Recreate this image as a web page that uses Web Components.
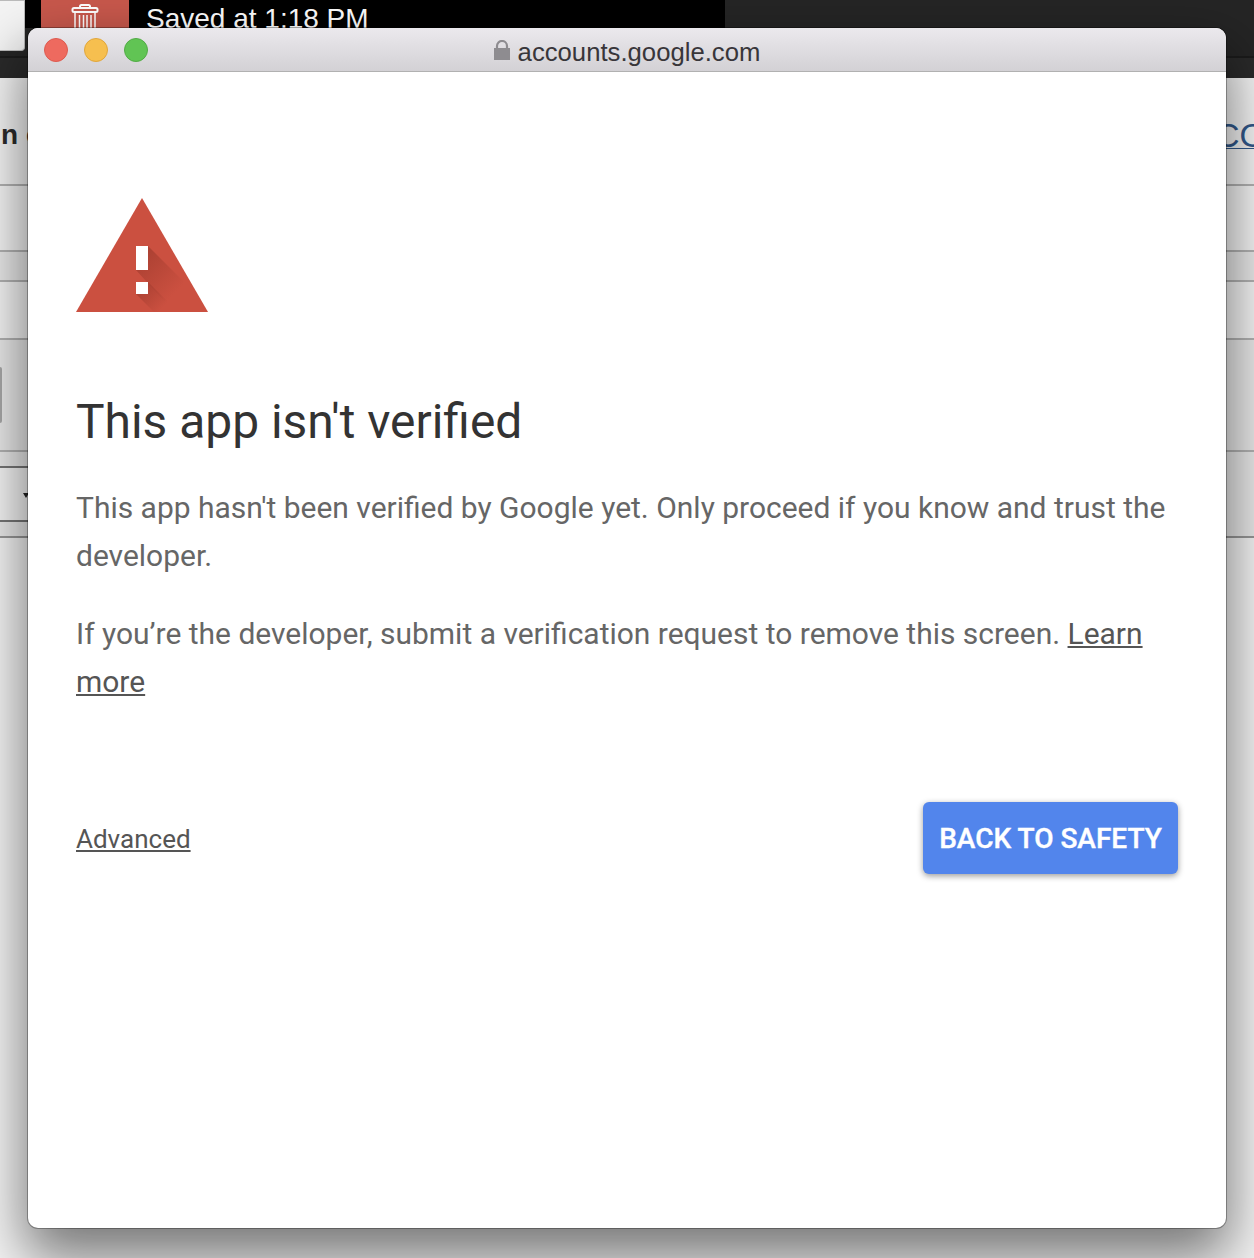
<!DOCTYPE html>
<html>
<head>
<meta charset="utf-8">
<title>This app isn't verified</title>
<style>
  html, body { margin: 0; height: 100%; overflow: hidden; background: #f2f2f2; }
</style>
</head>
<body>
<app-backdrop></app-backdrop>
<mac-window address="accounts.google.com">
  <unverified-page></unverified-page>
</mac-window>

<script>
const backdropTemplate = `
  <div class="top">
    <div class="tab"></div>
    <div class="black">
      <div class="trash">
        <svg width="28" height="26" viewBox="0 0 28 26" fill="none" stroke="#fff" stroke-width="2">
          <path d="M9 4V2.5Q9 1 10.5 1h7Q19 1 19 2.5V4"/>
          <rect x="1.5" y="4" width="25" height="4" rx="1.5"/>
          <path d="M4 8v18M24 8v18M8.500 11v15M12.500 11v15M16 11v15M20 11v15" stroke-width="1.500"/>
        </svg>
      </div>
      <span class="saved">Saved at 1:18 PM</span>
    </div>
    <div class="fill"></div>
  </div>
  <div class="under">
    <div class="line"></div>
    <div class="dark"></div>
  </div>
  <div class="row r1"><b>n o</b><a>CO</a></div>
  <div class="row r2"></div>
  <div class="row r3 band"></div>
  <div class="row r4"></div>
  <div class="row r5 band"><i class="edge"></i></div>
  <div class="row r6 band"><div class="seg top-seg"></div><div class="seg mid-seg"><i class="caret"></i></div></div>
  <div class="rest"></div>

  <style>
  :host {
    display: block;
    height: 1258px;
    overflow: hidden;
    font-family: "Liberation Sans", Arial, sans-serif;
  }

  .top {
    display: flex;
    height: 56px;
    background: #252525;
  }

  .tab {
    width: 24px;
    height: 49px;
    background: #f4f4f4;
    border: 1px solid #bbb;
    border-left: 0;
    border-radius: 0 0 4px 0;
  }

  .black {
    width: 700px;
    height: 28px;
    display: flex;
    align-items: flex-start;
    padding-left: 16px;
    box-sizing: border-box;
    background: #000;
    overflow: hidden;
  }

  .trash {
    width: 88px;
    height: 28px;
    background: #c8584c;
    display: flex;
    justify-content: center;
    padding-top: 4px;
    box-sizing: border-box;
  }

  .saved {
    margin-left: 17px;
    color: #fff;
    font-size: 28px;
    line-height: 37px;
    white-space: nowrap;
  }

  .fill { flex: 1; }

  .under .line { height: 2px; background: #1b1b1b; }
  .under .dark { height: 20px; background: #2a2a2a; }

  .row {
    border-bottom: 2px solid #b4b4b4;
    background: #f6f6f6;
    box-sizing: border-box;
    display: flex;
    overflow: hidden;
  }
  .band { background: #ebebeb; }
  .rest { height: 720px; background: #f6f6f6; }

  .r1 {
    height: 108px;
    justify-content: space-between;
    align-items: center;
    padding: 8px 0 0 1px;
    font-size: 28px;
    color: #2c2c2c;
  }
  .r1 a {
    margin-right: -12px;
    font-size: 34px;
    color: #32598c;
    text-decoration: underline;
    text-decoration-thickness: 1px;
  }
  .r2 { height: 66px; }
  .r3 { height: 30px; }
  .r4 { height: 58px; }
  .r5 { height: 112px; align-items: center; }
  .r6 { height: 86px; flex-direction: column; border-bottom-color: #989898; }

  .edge {
    width: 2px;
    height: 56px;
    background: #a9a9a9;
    border-radius: 0 4px 4px 0;
  }

  .seg { width: 28px; flex: none; }
  .top-seg { height: 14px; }
  .mid-seg {
    height: 56px;
    background: #f6f6f6;
    border-top: 2px solid #777;
    border-bottom: 2px solid #777;
    box-sizing: border-box;
    display: flex;
    justify-content: flex-end;
    padding-top: 25px;
  }
  .caret {
    width: 0;
    height: 0;
    border-left: 3px solid transparent;
    border-right: 3px solid transparent;
    border-top: 5px solid #222;
    margin-right: -1px;
  }
  </style>
`;

customElements.define(
  "app-backdrop",
  class AppBackdrop extends HTMLElement {
    constructor() {
      super();

      this.attachShadow({ mode: "open" });
      this.shadowRoot.innerHTML = backdropTemplate;
    }
  }
);

const windowTemplate = `
  <div class="bar">
    <div class="lights">
      <i class="red"></i>
      <i class="yellow"></i>
      <i class="green"></i>
    </div>
    <svg class="lock" width="16" height="20" viewBox="0 0 16 20">
      <path d="M3 9V6a5 5 0 0 1 10 0v3" fill="none" stroke="#8e8c90" stroke-width="2.200"/>
      <rect y="8" width="16" height="12" fill="#8e8c90"/>
    </svg>
    <span class="address"></span>
  </div>
  <div class="content"><slot></slot></div>

  <style>
  :host {
    position: absolute;
    left: 28px;
    top: 28px;
    width: 1198px;
    height: 1200px;
    display: flex;
    flex-direction: column;
    background: #fff;
    border-radius: 10px;
    box-shadow: 0 0 0 1px rgba(0, 0, 0, 0.3), 0 26px 56px 4px rgba(0, 0, 0, 0.52);
    overflow: hidden;
  }

  .bar {
    position: relative;
    height: 44px;
    flex: none;
    box-sizing: border-box;
    display: flex;
    align-items: center;
    justify-content: center;
    gap: 8px;
    padding-top: 6px;
    background: linear-gradient(#ebe9ed, #d3d1d5);
    border-bottom: 1px solid #b1b1b1;
  }

  .lights {
    position: absolute;
    left: 16px;
    top: 10px;
    display: flex;
    gap: 16px;
  }

  .lights i {
    width: 24px;
    height: 24px;
    box-sizing: border-box;
    border-radius: 50%;
    border: 1px solid;
  }
  .red { background: #ee6a5f; border-color: #dd5a4f !important; }
  .yellow { background: #f6bf4f; border-color: #e0a63c !important; }
  .green { background: #61c454; border-color: #52ab46 !important; }

  .lock { margin-top: -5px; }

  .address {
    font-family: "Liberation Sans", Arial, sans-serif;
    font-size: 25.700px;
    color: #38363a;
  }

  .content { flex: 1; }
  </style>
`;

customElements.define(
  "mac-window",
  class MacWindow extends HTMLElement {
    constructor() {
      super();

      this.attachShadow({ mode: "open" });
      this.shadowRoot.innerHTML = windowTemplate;
      this.shadowRoot.querySelector(".address").textContent = this.getAttribute("address");
    }
  }
);

const warningTemplate = `
  <svg width="132" height="114" viewBox="0 0 132 114">
    <defs>
      <linearGradient id="fade" gradientUnits="userSpaceOnUse" x1="66" y1="60" x2="100" y2="94">
        <stop offset="0" stop-color="#a83f31" stop-opacity="0.85"/>
        <stop offset="1" stop-color="#a83f31" stop-opacity="0"/>
      </linearGradient>
      <linearGradient id="fade-dot" gradientUnits="userSpaceOnUse" x1="66" y1="90" x2="86" y2="110">
        <stop offset="0" stop-color="#a83f31" stop-opacity="0.85"/>
        <stop offset="1" stop-color="#a83f31" stop-opacity="0"/>
      </linearGradient>
      <clipPath id="inside"><polygon points="66,0 132,114 0,114"/></clipPath>
    </defs>
    <polygon points="66,0 132,114 0,114" fill="#cb5040"/>
    <g clip-path="url(#inside)">
      <polygon points="72,48 118,94 98,114 60,72" fill="url(#fade)"/>
      <polygon points="72,84 96,108 84,114 78,114 60,96" fill="url(#fade-dot)"/>
    </g>
    <rect x="60" y="48" width="12" height="24" fill="#fff"/>
    <rect x="60" y="84" width="12" height="12" fill="#fff"/>
  </svg>

  <style>
  :host { display: block; height: 114px; }
  svg { display: block; }
  </style>
`;

customElements.define(
  "warning-icon",
  class WarningIcon extends HTMLElement {
    constructor() {
      super();

      this.attachShadow({ mode: "open" });
      this.shadowRoot.innerHTML = warningTemplate;
    }
  }
);

const pageTemplate = `
  <warning-icon></warning-icon>
  <h1>This app isn't verified</h1>
  <p>This app hasn't been verified by Google yet. Only proceed if you know and trust the developer.</p>
  <p class="second">If you’re the developer, submit a verification request to remove this screen. <a>Learn more</a></p>
  <div class="actions">
    <a class="advanced">Advanced</a>
    <button>BACK TO SAFETY</button>
  </div>

  <style>
  :host {
    display: block;
    padding: 126px 48px 0 48px;
    font-family: Roboto, Arial, sans-serif;
    color: #666;
  }

  h1 {
    margin: 79px 0 0 0;
    font-size: 47.900px;
    line-height: 62px;
    font-weight: 400;
    color: #333;
  }

  p {
    margin: 31px 0 0 0;
    font-size: 29.970px;
    line-height: 48px;
  }

  p.second { margin-top: 30px; }

  a {
    color: #555;
    text-decoration: underline;
  }

  .actions {
    display: flex;
    justify-content: space-between;
    align-items: center;
    margin-top: 96px;
  }

  .advanced { font-size: 26px; padding-top: 2px; }

  button {
    width: 255px;
    height: 72px;
    padding: 0;
    border: 0;
    border-radius: 6px;
    background: #5285ec;
    color: #fff;
    font-family: Roboto, Arial, sans-serif;
    font-size: 28px;
    font-weight: 500;
    -webkit-text-stroke: 0.400px #fff;
    box-shadow: 0 2px 6px rgba(0, 0, 0, 0.4);
  }
  </style>
`;

customElements.define(
  "unverified-page",
  class UnverifiedPage extends HTMLElement {
    constructor() {
      super();

      this.attachShadow({ mode: "open" });
      this.shadowRoot.innerHTML = pageTemplate;
    }
  }
);
</script>
</body>
</html>
